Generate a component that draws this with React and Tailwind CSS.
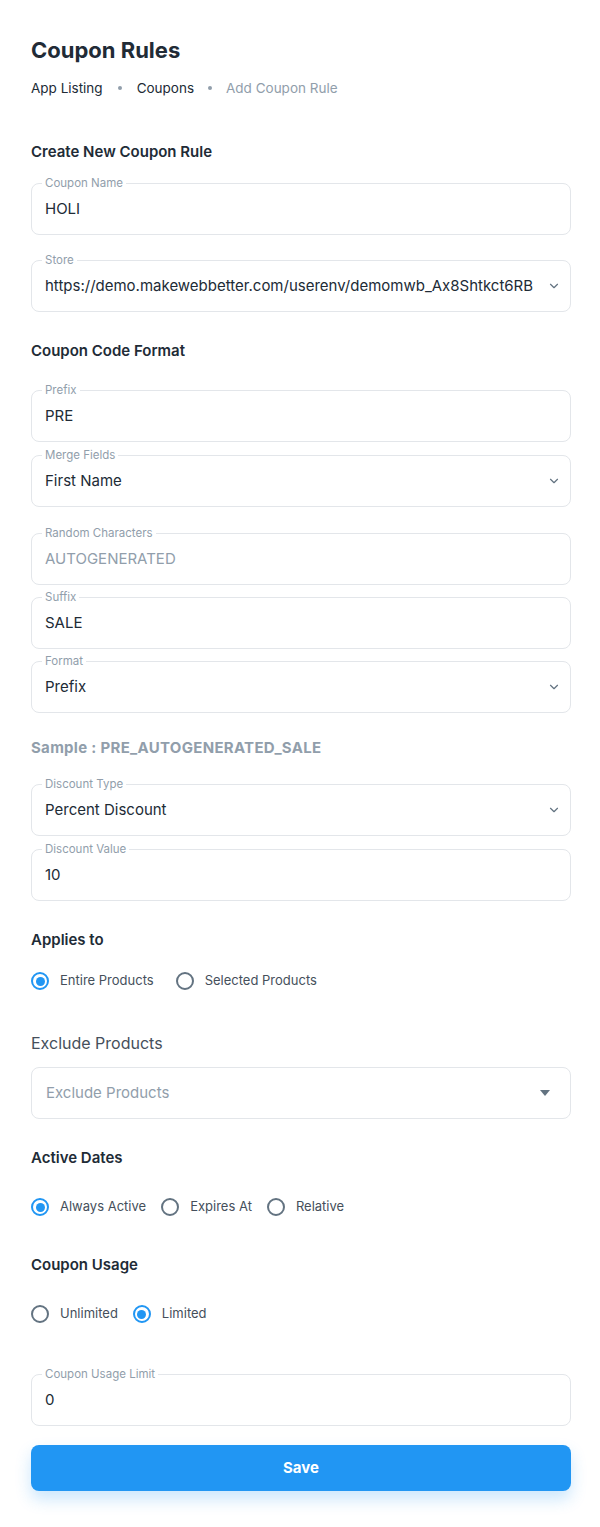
import React from "react";

const font = { fontFamily: "Inter, 'Noto Sans', sans-serif" };

function Chevron() {
  return (
    <svg width="14" height="14" viewBox="0 0 24 24" fill="none" stroke="#637381" strokeWidth="2" strokeLinecap="round" strokeLinejoin="round" className="shrink-0">
      <path d="M6 9l6 6 6-6" />
    </svg>
  );
}

function Field({ label, value, select, disabled, className = "" }) {
  return (
    <div className={`relative h-[52px] rounded-[8px] border border-[#e3e6ea] bg-white flex items-center pl-[13px] pr-[9px] ${className}`}>
      <span className="absolute -top-[8px] left-[10px] bg-white px-[3px] text-[11.5px] leading-[14px] text-[#919eab]">{label}</span>
      <span className={`flex-1 truncate text-[15px] ${disabled ? "text-[#919eab]" : "text-[#212b36]"}`}>{value}</span>
      {select && <Chevron />}
    </div>
  );
}

function Radio({ checked, label }) {
  return (
    <label className="flex items-center gap-[11px]">
      <span className={`flex h-[18px] w-[18px] items-center justify-center rounded-full border-2 ${checked ? "border-[#2196f3]" : "border-[#637381]"}`}>
        {checked && <span className="h-[9px] w-[9px] rounded-full bg-[#2196f3]" />}
      </span>
      <span className="text-[13px] text-[#454f5b]">{label}</span>
    </label>
  );
}

function Heading({ children, className = "" }) {
  return <h3 className={`text-[15px] leading-[24px] font-semibold text-[#212b36] ${className}`}>{children}</h3>;
}

export default function App() {
  return (
    <div style={font} className="min-h-[1527px] bg-white pl-[31px] pr-[29px] pt-[32px] pb-[37px] w-[600px]">
      <h1 className="text-[22px] leading-[36px] font-bold text-[#212b36]">Coupon Rules</h1>
      <nav className="mt-[9px] flex items-center text-[13.5px] leading-[22px]">
        <span className="text-[#212b36]">App Listing</span>
        <span className="mx-[15px] h-[4px] w-[4px] rounded-full bg-[#919eab]" />
        <span className="text-[#212b36]">Coupons</span>
        <span className="mx-[14px] h-[4px] w-[4px] rounded-full bg-[#919eab]" />
        <span className="text-[#919eab]">Add Coupon Rule</span>
      </nav>

      <Heading className="mt-[41px]">Create New Coupon Rule</Heading>
      <Field className="mt-[19px]" label="Coupon Name" value="HOLI" />
      <Field className="mt-[25px]" label="Store" value="https://demo.makewebbetter.com/userenv/demomwb_Ax8Shtkct6RB" select />

      <Heading className="mt-[27px]">Coupon Code Format</Heading>
      <Field className="mt-[27px]" label="Prefix" value="PRE" />
      <Field className="mt-[13px]" label="Merge Fields" value="First Name" select />
      <Field className="mt-[26px]" label="Random Characters" value="AUTOGENERATED" disabled />
      <Field className="mt-[12px]" label="Suffix" value="SALE" />
      <Field className="mt-[12px]" label="Format" value="Prefix" select />

      <p className="mt-[24px] text-[15px] leading-[22px] font-bold tracking-[0.3px] text-[#919eab]">Sample : PRE_AUTOGENERATED_SALE</p>

      <Field className="mt-[25px]" label="Discount Type" value="Percent Discount" select />
      <Field className="mt-[13px]" label="Discount Value" value="10" />

      <Heading className="mt-[27px]">Applies to</Heading>
      <div className="mt-[17px] flex h-[24px] items-center gap-[22px]">
        <Radio checked label="Entire Products" />
        <Radio label="Selected Products" />
      </div>

      <p className="mt-[38px] text-[16px] leading-[24px] text-[#454f5b]">Exclude Products</p>
      <div className="mt-[12px] flex h-[52px] items-center rounded-[8px] border border-[#e3e6ea] pl-[14px] pr-[20px]">
        <span className="flex-1 text-[15px] text-[#919eab]">Exclude Products</span>
        <svg width="10" height="6" viewBox="0 0 10 6"><path d="M0 0h10L5 6z" fill="#637381" /></svg>
      </div>

      <Heading className="mt-[27px]">Active Dates</Heading>
      <div className="mt-[25px] flex h-[24px] items-center gap-[15px]">
        <Radio checked label="Always Active" />
        <Radio label="Expires At" />
        <Radio label="Relative" />
      </div>

      <Heading className="mt-[34px]">Coupon Usage</Heading>
      <div className="mt-[25px] flex h-[24px] items-center gap-[15px]">
        <Radio label="Unlimited" />
        <Radio checked label="Limited" />
      </div>

      <Field className="mt-[48px]" label="Coupon Usage Limit" value="0" />

      <button className="mt-[19px] h-[46px] w-full rounded-[8px] bg-[#2196f3] text-[15px] font-bold text-white shadow-[0_8px_16px_0_rgba(33,150,243,0.24)]">
        Save
      </button>
    </div>
  );
}
